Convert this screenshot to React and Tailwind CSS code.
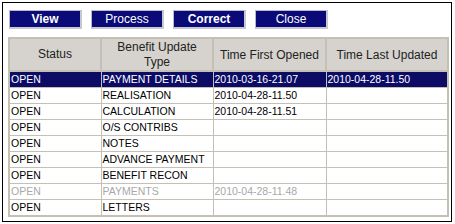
import React from 'react'

const rows = [
  { status: 'OPEN', type: 'PAYMENT DETAILS', first: '2010-03-16-21.07', last: '2010-04-28-11.50', sel: true },
  { status: 'OPEN', type: 'REALISATION', first: '2010-04-28-11.50', last: '' },
  { status: 'OPEN', type: 'CALCULATION', first: '2010-04-28-11.51', last: '' },
  { status: 'OPEN', type: 'O/S CONTRIBS', first: '', last: '' },
  { status: 'OPEN', type: 'NOTES', first: '', last: '' },
  { status: 'OPEN', type: 'ADVANCE PAYMENT', first: '', last: '' },
  { status: 'OPEN', type: 'BENEFIT RECON', first: '', last: '' },
  { status: 'OPEN', type: 'PAYMENTS', first: '2010-04-28-11.48', last: '', dim: true },
  { status: 'OPEN', type: 'LETTERS', first: '', last: '' },
]

const buttons = [
  { label: 'View', bold: true },
  { label: 'Process' },
  { label: 'Correct', bold: true },
  { label: 'Close' },
]

export default function App() {
  const cell = 'border border-[#c4c0b4] px-[1px] h-[16px] leading-[15px] whitespace-nowrap'
  return (
    <div className="w-[455px] h-[224px] bg-white p-[2px] font-['Liberation_Sans',Arial,sans-serif]">
      <div className="w-[450px] h-[220px] border-[1.5px] border-black pt-[7px] pl-[5px]">
        {/* botones */}
        <div className="flex gap-[9px] ml-[1px]">
          {buttons.map(b => (
            <button key={b.label}
              className={`w-[73px] h-[19px] bg-[#0a0a78] text-white text-[12px] leading-none border-t border-l border-t-[#b8b8c8] border-l-[#b8b8c8] border-b-2 border-r-2 border-b-[#c8c8d0] border-r-[#c8c8d0] ${b.bold ? 'font-bold' : ''}`}>
              {b.label}
            </button>
          ))}
        </div>

        {/* tabla */}
        <table className="mt-[8px] border-collapse border-2 border-[#c4c0b4] text-[10.5px] w-[439px] table-fixed">
          <colgroup>
            <col className="w-[92px]" />
            <col className="w-[112px]" />
            <col className="w-[113px]" />
            <col className="w-[122px]" />
          </colgroup>
          <thead>
            <tr className="bg-[#d6d3ce] text-[#222] text-[12px]">
              <th className="border-2 border-[#c4c0b4] font-normal h-[33px] leading-[15px]">Status</th>
              <th className="border-2 border-[#c4c0b4] font-normal leading-[15px]">Benefit Update<br />Type</th>
              <th className="border-2 border-[#c4c0b4] font-normal whitespace-nowrap">Time First Opened</th>
              <th className="border-2 border-[#c4c0b4] font-normal whitespace-nowrap">Time Last Updated</th>
            </tr>
          </thead>
          <tbody>
            {rows.map((r, i) => {
              const color = r.sel ? 'bg-[#0c0c66] text-white' : r.dim ? 'text-[#a8a8a8]' : 'text-black'
              return (
                <tr key={i} className={color}>
                  <td className={cell}>{r.status}</td>
                  <td className={cell}>{r.type}</td>
                  <td className={cell}>{r.first}</td>
                  <td className={cell}>{r.last}</td>
                </tr>
              )
            })}
          </tbody>
        </table>
      </div>
    </div>
  )
}
